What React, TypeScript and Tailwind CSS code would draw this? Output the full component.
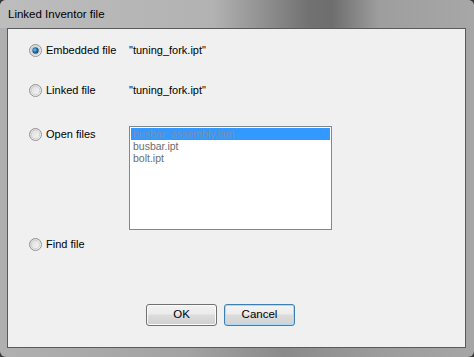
import React from 'react';

const font = { fontFamily: '"Liberation Sans", Arial, sans-serif' };

function Radio({ checked = false }: { checked?: boolean }) {
  return (
    <svg width="13" height="13" viewBox="0 0 13 13" className="shrink-0">
      <defs>
        <linearGradient id="rg" x1="0" y1="0" x2="1" y2="1">
          <stop offset="0" stopColor="#d9d9d9" />
          <stop offset="1" stopColor="#fafafa" />
        </linearGradient>
        <radialGradient id="dot" cx="0.4" cy="0.4" r="0.7">
          <stop offset="0" stopColor="#86c3ea" />
          <stop offset="0.5" stopColor="#1f6ca8" />
          <stop offset="1" stopColor="#0d3a64" />
        </radialGradient>
      </defs>
      <circle cx="6.5" cy="6.5" r="6" fill="url(#rg)" stroke="#929292" strokeWidth="1" />
      <circle cx="6.5" cy="6.5" r="4.3" fill="none" stroke="#cfcfcf" strokeWidth="1" />
      {checked && <circle cx="6.5" cy="6.5" r="3.2" fill="url(#dot)" />}
    </svg>
  );
}

function Button({ label, focused = false }: { label: string; focused?: boolean }) {
  return (
    <div
      className={
        'w-[71px] h-[22px] rounded-[3px] border flex items-center justify-center text-[11.5px] text-black ' +
        (focused
          ? 'border-[#3c7fb1] shadow-[inset_0_0_0_1px_#a8dcf5] bg-[linear-gradient(#f4f4f4,#ececec_45%,#dcdcdc_50%,#d2d2d2)]'
          : 'border-[#707070] shadow-[inset_0_0_0_1px_#fbfbfb] bg-[linear-gradient(#f2f2f2,#ebebeb_45%,#dddddd_50%,#cfcfcf)]')
      }
    >
      {label}
    </div>
  );
}

export default function App() {
  const files = ['busbar_assembly.iam', 'busbar.ipt', 'bolt.ipt'];

  return (
    <div className="w-[474px] h-[357px] bg-[#3a3a3a]" style={font}>
      <div className="w-full h-full rounded-[6px] bg-[linear-gradient(90deg,#b0b0b0,#a2a2a2_40%,#8a8a8a_60%,#9c9c9c_80%,#a6a6a6)] flex flex-col pl-[7px] pr-[8px] pb-[9px]">
        {/* Title bar */}
        <div className="h-[28px] -mx-[7px] -mr-[8px] px-[8px] pt-[1px] flex items-center rounded-t-[6px] bg-[linear-gradient(90deg,#bdbdbd,#b2b2b2_45%,#727272_65%,#6e6e6e_70%,#9e9e9e_80%,#a7a7a7)] text-[11.5px] text-black">
          Linked Inventor file
        </div>

        {/* Client area */}
        <div className="flex-1 bg-[#f0f0f0] border border-[#5a5a5a] pl-[21px] pt-[13px] text-[11px] text-black">
          <div className="h-[16px] flex items-center">
            <div className="w-[100px] flex items-center gap-[4px]">
              <Radio checked />
              <span>Embedded file</span>
            </div>
            <span>"tuning_fork.ipt"</span>
          </div>

          <div className="h-[16px] mt-[24px] flex items-center">
            <div className="w-[100px] flex items-center gap-[4px]">
              <Radio />
              <span>Linked file</span>
            </div>
            <span>"tuning_fork.ipt"</span>
          </div>

          <div className="mt-[28px] flex items-start">
            <div className="w-[100px] h-[16px] flex items-center gap-[4px]">
              <Radio />
              <span>Open files</span>
            </div>
            <div className="w-[203px] h-[104px] bg-white border border-[#828790] p-[1px] text-[#6d6d6d] text-[10.5px] leading-[12px]">
              {files.map((f, i) => (
                <div
                  key={f}
                  className={'h-[12px] pl-[2px] ' + (i === 0 ? 'bg-[#3399ff] text-[#7a8fb0]' : '')}
                >
                  {f}
                </div>
              ))}
            </div>
          </div>

          <div className="h-[16px] mt-[6px] flex items-center gap-[4px]">
            <Radio />
            <span>Find file</span>
          </div>

          <div className="mt-[52px] ml-[117px] flex gap-[7px]">
            <Button label="OK" />
            <Button label="Cancel" focused />
          </div>
        </div>
      </div>
    </div>
  );
}
